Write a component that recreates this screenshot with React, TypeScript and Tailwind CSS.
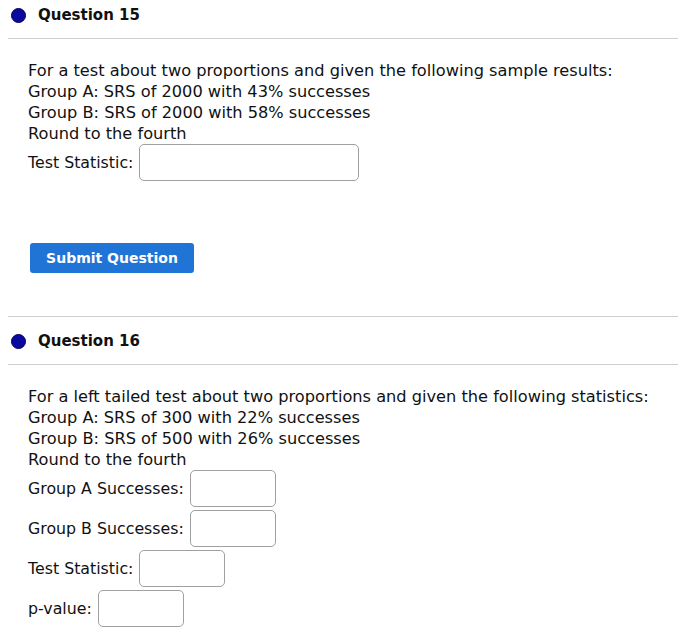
import React from "react";

function QuestionHeader({ num }: { num: number }) {
  return (
    <div className="flex h-[47px] items-center gap-[12px] border-b border-[#cfcfcf] pl-[3px]">
      <span className="h-[15px] w-[15px] rounded-full border border-[#000060] bg-[#0a0aa0]" />
      <span className="text-[15px] font-bold text-[#111]">Question {num}</span>
    </div>
  );
}

function Field({ label, width }: { label: string; width: string }) {
  return (
    <div className="flex items-center gap-[6px] py-[1.5px]">
      <span className="text-[15.8px]">{label}</span>
      <input
        type="text"
        className={`h-[37px] ${width} rounded-[5px] border border-[#a0a0a0] bg-white`}
      />
    </div>
  );
}

export default function App() {
  return (
    <div
      className="h-[629px] w-[678px] overflow-hidden bg-white text-[16.2px] leading-[21px] text-[#111]"
      style={{ fontFamily: '"DejaVu Sans", sans-serif' }}
    >
      <div className="-mt-[8px] ml-[8px]">
        <QuestionHeader num={15} />
      </div>
      <div className="pl-[28px] pt-[21px]">
        <p>For a test about two proportions and given the following sample results:</p>
        <p>Group A: SRS of 2000 with 43% successes</p>
        <p>Group B: SRS of 2000 with 58% successes</p>
        <p>Round to the fourth</p>
        <div className="-mt-[2px]">
          <Field label="Test Statistic:" width="w-[220px]" />
        </div>
      </div>
      <div className="pl-[30px] pt-[61px]">
        <button
          type="button"
          className="h-[30px] w-[164px] rounded-[3px] bg-[#1f74d6] text-[14px] font-bold text-white"
        >
          Submit Question
        </button>
      </div>
      <div className="ml-[8px] mt-[43px] border-t border-[#cfcfcf] pt-[1px]">
        <QuestionHeader num={16} />
      </div>
      <div className="pl-[28px] pt-[21px]">
        <p>For a left tailed test about two proportions and given the following statistics:</p>
        <p>Group A: SRS of 300 with 22% successes</p>
        <p>Group B: SRS of 500 with 26% successes</p>
        <p>Round to the fourth</p>
        <div className="-mt-[2px] flex flex-col">
          <Field label="Group A Successes:" width="w-[86px]" />
          <Field label="Group B Successes:" width="w-[86px]" />
          <Field label="Test Statistic:" width="w-[86px]" />
          <Field label="p-value:" width="w-[86px]" />
        </div>
      </div>
    </div>
  );
}
